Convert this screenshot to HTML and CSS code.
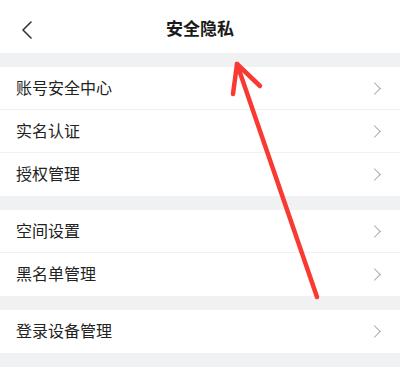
FILE: index.html
```html
<!DOCTYPE html>
<html lang="zh">
<head>
<meta charset="utf-8">
<link rel="stylesheet" href="styles.css">
</head>
<body>
<div class="page">
  <header class="nav">
    <svg class="back" width="12" height="18" viewBox="0 0 12 18"><path d="M10 1 L2 9 L10 17" fill="none" stroke="#333" stroke-width="1.6" stroke-linecap="round" stroke-linejoin="round"/></svg>
    <h1 class="title">安全隐私</h1>
  </header>
  <div class="gap"></div>
  <section class="group">
    <div class="row"><span class="label">账号安全中心</span><i class="chev"></i></div>
    <div class="row"><span class="label">实名认证</span><i class="chev"></i></div>
    <div class="row"><span class="label">授权管理</span><i class="chev"></i></div>
  </section>
  <div class="gap"></div>
  <section class="group">
    <div class="row"><span class="label">空间设置</span><i class="chev"></i></div>
    <div class="row"><span class="label">黑名单管理</span><i class="chev"></i></div>
  </section>
  <div class="gap"></div>
  <section class="group">
    <div class="row"><span class="label">登录设备管理</span><i class="chev"></i></div>
  </section>
  <div class="gap fill"></div>
  <svg class="arrow" width="400" height="367" viewBox="0 0 400 367">
    <g fill="none" stroke="#f93a33" stroke-width="4.5" stroke-linecap="round" stroke-linejoin="round">
      <path d="M317 297 L237 64"/>
      <path d="M233 94 L237 64 L260 86"/>
    </g>
  </svg>
</div>
</body>
</html>
```
FILE: styles.css
```css
html, body { margin: 0; padding: 0; }
body {
  font-family: "Noto Sans CJK SC", "Noto Sans", sans-serif;
  background: #f0f1f3;
  width: 400px;
  height: 367px;
  overflow: hidden;
}
.page { position: relative; width: 400px; height: 367px; display: flex; flex-direction: column; }
.nav {
  height: 53px;
  background: #fff;
  display: flex;
  align-items: center;
  justify-content: center;
  position: relative;
}
.back { position: absolute; left: 21px; top: 21px; }
.title { margin: 0; font-size: 17px; font-weight: 700; color: #1a1a1a; line-height: 1; padding-top: 1px; }
.gap { height: 14px; }
.gap.fill { flex: 1; }
.group { background: #fff; }
.row {
  height: 42px;
  display: flex;
  align-items: center;
  justify-content: space-between;
  padding: 0 16px;
  font-size: 16px;
  color: #222;
  border-bottom: 1px solid #f1f1f1;
}
.row:last-child { border-bottom: none; height: 43px; }
.label { line-height: 1; padding-bottom: 3px; }
.chev {
  width: 8px; height: 8px;
  border-top: 1.3px solid #a8a8a8;
  border-right: 1.3px solid #a8a8a8;
  transform: rotate(45deg);
  margin-right: 5px;
}
.arrow { position: absolute; left: 0; top: 0; pointer-events: none; }
```
